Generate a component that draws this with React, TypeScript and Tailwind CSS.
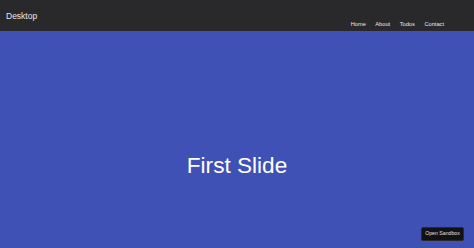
import React from "react";

export default function App() {
  return (
    <div className="relative h-[248px] w-[474px] overflow-hidden bg-[#3f51b5]" style={{ fontFamily: '"Liberation Sans", Arial, sans-serif' }}>
      <header className="flex h-[31px] items-start justify-between bg-[#29292c] text-white">
        <div className="pl-[6px] pt-[11px] text-[8.5px] leading-[11px] text-[#e8e8e8]">Desktop</div>
        <nav className="flex gap-[9.5px] pr-[30px] pt-[19.5px] text-[5.7px] leading-[8px] text-[#e8e8e8]">
          <span>Home</span>
          <span>About</span>
          <span>Todos</span>
          <span>Contact</span>
        </nav>
      </header>
      <main className="flex justify-center pt-[122px]">
        <h1 className="text-[22.6px] leading-[26px] text-white">First Slide</h1>
      </main>
      <button className="absolute bottom-[7px] right-[10px] flex h-[14px] w-[43px] items-center justify-center rounded-[2px] border border-[#2a2a2a] bg-[#111214] text-[5.2px] text-[#e0e0e0]">
        Open Sandbox
      </button>
    </div>
  );
}
